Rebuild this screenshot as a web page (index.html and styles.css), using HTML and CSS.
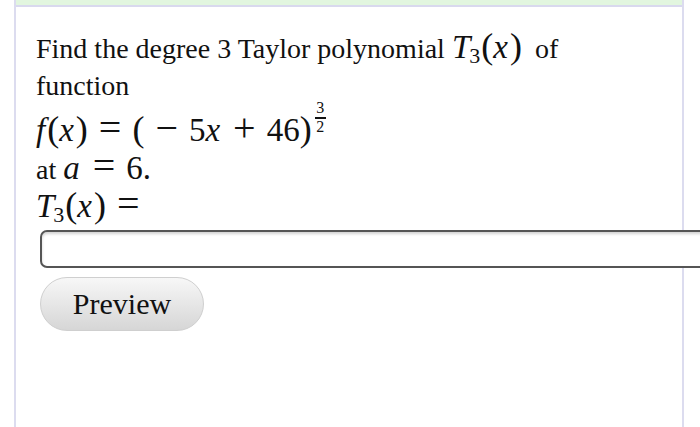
FILE: index.html
```html
<!DOCTYPE html>
<html>
<head>
<meta charset="utf-8">
<link rel="stylesheet" href="styles.css">
</head>
<body>
<div class="card">
  <div class="strip"></div>
  <div class="content">
    <p class="q">Find the degree 3 Taylor polynomial <span class="m mq"><i class="v">T</i><sub class="sub">3</sub><span class="p">(</span><i class="v">x</i><span class="p">)</span></span> of function</p>
    <div class="mline"><span class="m"><i class="v">f</i><span class="p">(</span><i class="v">x</i><span class="p">)</span><span class="op">=</span><span class="p">(</span><span class="op">−</span>5<i class="v">x</i><span class="op">+</span>46<span class="p">)</span><span class="frac"><span class="num">3</span><span class="bar"></span><span class="den">2</span></span></span></div>
    <div class="tline">at <span class="m"><i class="v">a</i><span class="op">=</span>6.</span></div>
    <div class="tline"><span class="m"><i class="v">T</i><sub class="sub">3</sub><span class="p">(</span><i class="v">x</i><span class="p">)</span><span class="op">=</span></span></div>
    <div class="inputrow"><div class="field"></div></div>
    <button class="btn">Preview</button>
  </div>
</div>
</body>
</html>
```

FILE: styles.css
```css
html, body {
  margin: 0;
  padding: 0;
  background: #ffffff;
  overflow: hidden;
  width: 700px;
  height: 427px;
}
body {
  font-family: "Liberation Serif", "Times New Roman", serif;
  color: #111;
}
.card {
  margin-left: 14px;
  width: 666px;
  height: 427px;
  border-left: 2px solid #dcdcef;
  border-right: 2px solid #dcdcef;
}
.strip {
  height: 5px;
  background: #e2f6df;
  border-bottom: 2px solid #d9d9ee;
}
.content {
  padding-left: 20px;
  padding-top: 21px;
}
.q {
  margin: 0;
  font-size: 28px;
  line-height: 37px;
  width: 600px;
}
.m {
  font-family: "Liberation Serif", serif;
  font-size: 33px;
  line-height: 37px;
  white-space: nowrap;
}
.mq {
  margin-right: 6px;
}
.v {
  font-style: italic;
  margin-right: 2px;
}
.sub {
  font-size: 22px;
  vertical-align: -5px;
  line-height: 0;
  margin-left: -3px;
  margin-right: 1px;
}
.p {
  font-size: 36px;
}
.op {
  font-size: 40px;
  line-height: 30px;
  margin: 0 11px;
}
.mline {
  margin-top: -3px;
  line-height: 37px;
  font-size: 28px;
}
.frac {
  display: inline-flex;
  flex-direction: column;
  align-items: center;
  vertical-align: 28px;
  margin-left: 3px;
  font-size: 16px;
  line-height: 14px;
}
.num, .den {
  display: block;
}
.bar {
  display: block;
  width: 11px;
  height: 1.5px;
  background: #111;
  margin: 2px 0 1px;
}
.tline {
  font-size: 28px;
  line-height: 37px;
  height: 37px;
}
.inputrow {
  margin-top: 6px;
  margin-left: 4px;
  width: 700px;
}
.field {
  box-sizing: border-box;
  height: 38px;
  width: 700px;
  border: 2px solid #555;
  border-radius: 7px;
  background: #fff;
  box-shadow: inset 0 2px 3px rgba(0,0,0,0.18);
}
.btn {
  display: block;
  margin-top: 9px;
  margin-left: 4px;
  box-sizing: border-box;
  width: 164px;
  height: 54px;
  border-radius: 27px;
  border: 1px solid #cfcfcf;
  background: linear-gradient(#f7f7f7, #d6d6d6);
  font-family: "Liberation Serif", serif;
  font-size: 30px;
  color: #111;
  padding: 0;
}
```
